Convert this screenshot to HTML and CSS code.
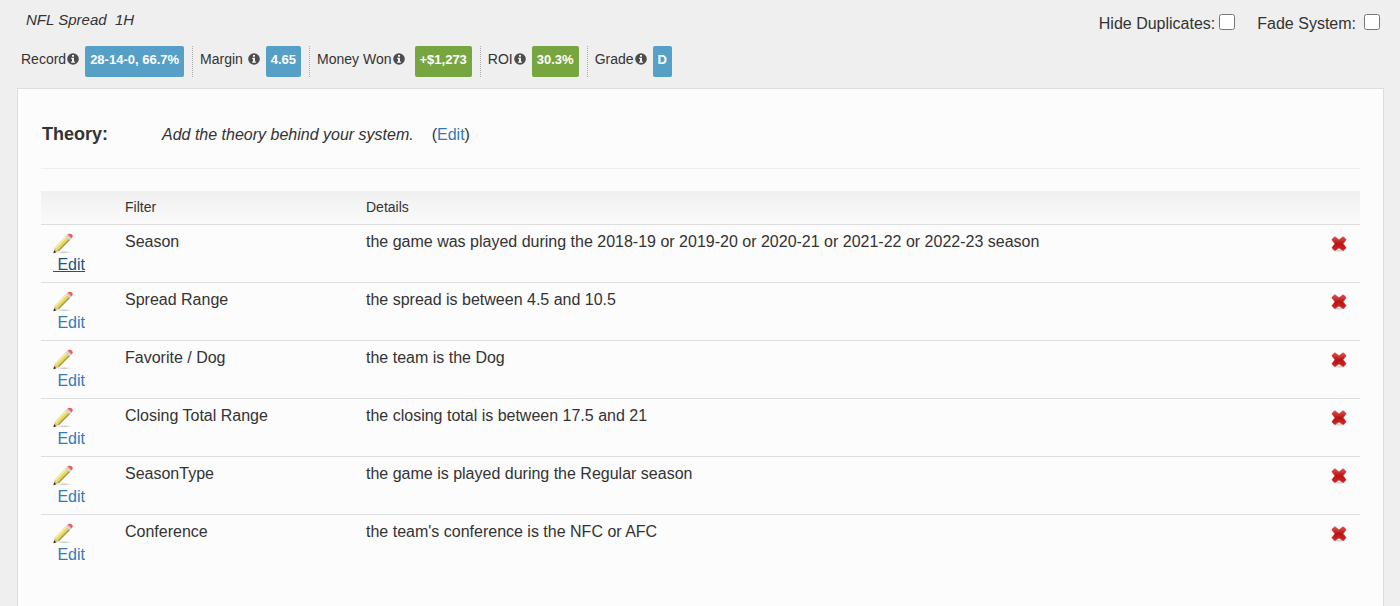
FILE: index.html
```html
<!DOCTYPE html>
<html lang="en">

<head>
  <meta charset="UTF-8">
  <title>NFL Spread 1H</title>
  <meta name="viewport" content="width=device-width, initial-scale=1">
  <link rel="stylesheet" href="styles.css">
</head>

<body>
  <!-- shared icons -->
  <svg class="sprite" aria-hidden="true">
    <defs>
      <linearGradient id="red" x1="0" y1="0" x2="0" y2="1">
        <stop offset="0" stop-color="#e25050"/>
        <stop offset=".5" stop-color="#b81414"/>
        <stop offset="1" stop-color="#d42424"/>
      </linearGradient>
      <radialGradient id="shade">
        <stop offset="0" stop-color="#000" stop-opacity=".22"/>
        <stop offset="1" stop-color="#000" stop-opacity="0"/>
      </radialGradient>
    </defs>
    <symbol id="info" viewBox="0 0 12 12">
      <circle cx="6" cy="6" r="5.8" fill="#4d4d4d"/>
      <path d="M5 2h2v1.8H5zM4.2 4.8H7v3.7h.9v1.3H4.1V8.5H5V6h-.8z" fill="#f4f4f4"/>
    </symbol>
    <symbol id="pencil" viewBox="0 0 20 22">
      <ellipse cx="11" cy="19.3" rx="8" ry="1.4" fill="url(#shade)"/>
      <path d="M.6 19.9 1.8 14.6 5.8 18.2z" fill="#dfc08c"/>
      <path d="M.4 20.2 1.1 17.2 3.3 19.2z" fill="#30271a"/>
      <path d="M1.8 14.6 12.8 3.2 17 7 5.8 18.2z" fill="#e6d662"/>
      <path d="M1.8 14.6 12.8 3.2 14.2 4.4 3.1 15.8z" fill="#f3eaa0"/>
      <path d="M4.8 17.3 16 6.1 17 7 5.8 18.2z" fill="#ab9a4a"/>
      <path d="M12.8 3.2 14.4 1.6 18.6 5.4 17 7z" fill="#d0d0d4"/>
      <path d="M14.4 1.6Q16.8-.2 18.9 1.4 20.6 3.3 18.6 5.4z" fill="#ea5f5f"/>
    </symbol>
    <symbol id="cross" viewBox="0 0 16 16">
      <ellipse cx="8" cy="14.8" rx="8" ry="1.2" fill="url(#shade)"/>
      <path d="M3.3 1 1.1 3.1Q.8 3.7 1.1 4.2L3.8 7.7 1.1 11.2Q.8 11.8 1.1 12.3L3.3 14.4Q4 14.7 4.5 14.4L8 12 11.5 14.4Q12 14.7 12.7 14.4L14.9 12.3Q15.2 11.8 14.9 11.2L12.2 7.7 14.9 4.2Q15.2 3.7 14.9 3.1L12.7 1Q12 .7 11.5 1L8 3.8 4.5 1Q4 .7 3.3 1z" fill="url(#red)" stroke="#c94a4a" stroke-width=".5"/>
    </symbol>
  </svg>

  <header class="system-header">
    <div>
      <h1>NFL Spread&nbsp; 1H</h1>
      <ul class="stats">
        <li>Record<svg class="info"><use href="#info"/></svg> <span class="badge">28-14-0, 66.7%</span></li>
        <li>Margin&nbsp;<svg class="info"><use href="#info"/></svg> <span class="badge">4.65</span></li>
        <li>Money Won<svg class="info"><use href="#info"/></svg> <span class="badge green wide-gap">+$1,273</span></li>
        <li>ROI<svg class="info"><use href="#info"/></svg> <span class="badge green">30.3%</span></li>
        <li>Grade<svg class="info"><use href="#info"/></svg> <span class="badge">D</span></li>
      </ul>
    </div>
    <div class="options">
      <label for="hide-duplicates">Hide Duplicates:</label>
      <input type="checkbox" id="hide-duplicates">
      <label class="fade" for="fade-system">Fade System:</label>
      <input class="fade-box" type="checkbox" id="fade-system">
    </div>
  </header>

  <main class="panel">
    <section class="theory">
      <h2>Theory:</h2>
      <em>Add the theory behind your system.</em>
      <span class="theory-edit">(<a href="#">Edit</a>)</span>
    </section>

    <table class="filters">
      <thead>
        <tr>
          <th class="col-edit"></th>
          <th class="col-filter">Filter</th>
          <th>Details</th>
          <th class="col-delete"></th>
        </tr>
      </thead>
      <tbody>
        <tr>
          <td><a class="edit active" href="#"><svg class="pencil"><use href="#pencil"/></svg><br>&nbsp;Edit</a></td>
          <td>Season</td>
          <td>the game was played during the 2018-19 or 2019-20 or 2020-21 or 2021-22 or 2022-23 season</td>
          <td><button class="delete" type="button" aria-label="Delete"><svg><use href="#cross"/></svg></button></td>
        </tr>
        <tr>
          <td><a class="edit" href="#"><svg class="pencil"><use href="#pencil"/></svg><br>&nbsp;Edit</a></td>
          <td>Spread Range</td>
          <td>the spread is between 4.5 and 10.5</td>
          <td><button class="delete" type="button" aria-label="Delete"><svg><use href="#cross"/></svg></button></td>
        </tr>
        <tr>
          <td><a class="edit" href="#"><svg class="pencil"><use href="#pencil"/></svg><br>&nbsp;Edit</a></td>
          <td>Favorite / Dog</td>
          <td>the team is the Dog</td>
          <td><button class="delete" type="button" aria-label="Delete"><svg><use href="#cross"/></svg></button></td>
        </tr>
        <tr>
          <td><a class="edit" href="#"><svg class="pencil"><use href="#pencil"/></svg><br>&nbsp;Edit</a></td>
          <td>Closing Total Range</td>
          <td>the closing total is between 17.5 and 21</td>
          <td><button class="delete" type="button" aria-label="Delete"><svg><use href="#cross"/></svg></button></td>
        </tr>
        <tr>
          <td><a class="edit" href="#"><svg class="pencil"><use href="#pencil"/></svg><br>&nbsp;Edit</a></td>
          <td>SeasonType</td>
          <td>the game is played during the Regular season</td>
          <td><button class="delete" type="button" aria-label="Delete"><svg><use href="#cross"/></svg></button></td>
        </tr>
        <tr>
          <td><a class="edit" href="#"><svg class="pencil"><use href="#pencil"/></svg><br>&nbsp;Edit</a></td>
          <td>Conference</td>
          <td>the team's conference is the NFC or AFC</td>
          <td><button class="delete" type="button" aria-label="Delete"><svg><use href="#cross"/></svg></button></td>
        </tr>
      </tbody>
    </table>
  </main>
</body>

</html>
```

FILE: styles.css
```css
* {
  box-sizing: border-box;
}

body {
  margin: 0;
  min-height: 100vh;
  padding: 0 16px 0 17px;
  display: flex;
  flex-direction: column;
  background: #efefef;
  color: #333;
  font-family: "Liberation Sans", Arial, Helvetica, sans-serif;
  font-size: 16px;
  line-height: 23px;
}

a {
  color: #337ab7;
  text-decoration: none;
}

.sprite {
  position: absolute;
  width: 0;
  height: 0;
}

.system-header {
  display: flex;
  justify-content: space-between;
  padding: 8px 4px 11px;
}

h1 {
  margin: 0 0 15px 5px;
  font-size: 15px;
  font-style: italic;
  font-weight: 400;
}

.stats {
  display: flex;
  margin: 0;
  padding: 0;
  list-style: none;
  font-size: 14px;
  line-height: 27px;
}

.stats li {
  display: flex;
  height: 31px;
  padding: 0 8px 0 7px;
  border-left: 1px dotted #aaa;
}

.stats li:first-child {
  padding-left: 0;
  border-left: 0;
}

.info {
  width: 12px;
  height: 12px;
  margin: 7px 6px 0 1px;
}

.badge {
  padding: 0 5px;
  border-radius: 2px;
  background: #569fc6;
  color: #fff;
  font-size: 13px;
  font-weight: 700;
}

.badge.green {
  background: #77a641;
}

.wide-gap {
  margin-left: 4px;
}

.options {
  display: flex;
  align-items: flex-start;
  padding-top: 4px;
}

.options input {
  width: 16px;
  height: 16px;
  margin: 2px 0 0 4px;
}

.options .fade {
  margin-left: 22px;
}

.options .fade-box {
  margin-left: 8px;
}

.panel {
  flex: 1;
  padding: 22px 23px;
  border: 1px solid #ddd;
  border-bottom: 0;
  background: #fcfcfc;
}

.theory {
  display: flex;
  align-items: center;
  padding: 12px 1px 22px;
  margin-bottom: 22px;
  border-bottom: 1px solid #eee;
}

h2 {
  width: 120px;
  margin: 0;
  font-size: 18px;
}

.theory-edit {
  margin-left: 18px;
}

.filters {
  width: 100%;
  border-collapse: collapse;
  table-layout: fixed;
}

.filters th {
  padding: 5px 0;
  background: linear-gradient(#f0f0f0, #fafafa);
  border-bottom: 1px solid #ddd;
  font-size: 14px;
  font-weight: 400;
  text-align: left;
}

.filters td {
  padding: 5px 0 6px;
  border-bottom: 1px solid #ddd;
  vertical-align: top;
}

.filters tr:last-child td {
  border-bottom: 0;
}

.filters .col-edit {
  width: 84px;
}

.filters .col-filter {
  width: 241px;
}

.filters .col-delete {
  width: 32px;
}

.edit {
  display: block;
  width: max-content;
  margin-left: 12px;
}

.edit.active {
  color: #23527c;
  text-decoration: underline;
}

.pencil {
  width: 20px;
  height: 22px;
  margin-top: 3px;
  margin-bottom: -3px;
  vertical-align: top;
}

.delete {
  display: block;
  margin: 6px 0 0 3px;
  padding: 0;
  border: 0;
  background: none;
  cursor: pointer;
}

.delete svg {
  display: block;
  width: 16px;
  height: 16px;
}
```
